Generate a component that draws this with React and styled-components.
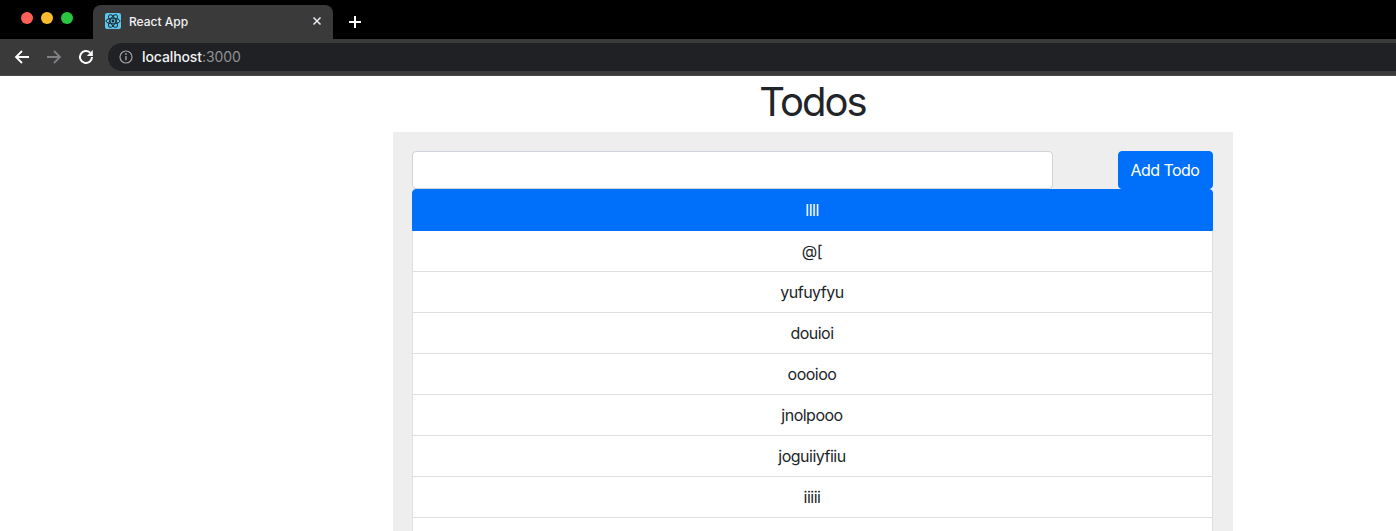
import React from "react";
import styled, { createGlobalStyle } from "styled-components";

const Global = createGlobalStyle`
  html, body { margin: 0; padding: 0; height: 531px; overflow: hidden; background: #fff; }
  body { font-family: Inter, "Liberation Sans", sans-serif; color: #212529; }
  * { box-sizing: border-box; }
`;
const Page = styled.div`height: 531px; overflow: hidden; display: flex; flex-direction: column;`;
const TabStrip = styled.div`height: 39px; flex: none; background: #000; display: flex; align-items: flex-end;`;
const Lights = styled.div`width: 93px; flex: none; height: 39px; display: flex; gap: 8px; padding: 12px 0 0 21px;`;
const Light = styled.span`width: 12px; height: 12px; border-radius: 50%; background: ${p => p.$c};`;
const Tab = styled.div`
  width: 240px; height: 34px; background: #3a3a3b; border-radius: 8px 8px 0 0;
  display: flex; align-items: center; padding: 0 11px 2px 12px; color: #f1f3f4; font-size: 12px; font-weight: 500;
`;
const Favicon = styled.svg`width: 16px; height: 16px; margin-right: 8px; flex: none;`;
const TabTitle = styled.span`flex: 1;`;
const IconSvg = styled.svg`flex: none; display: block;`;
const NewTab = styled.div`margin: 0 0 10px 15px; height: 14px;`;
const Toolbar = styled.div`
  height: 37px; flex: none; background: #3a3a3b; display: flex; align-items: center; padding: 0 0 1px 14px;
  border-bottom: 1px solid #4a4a4c;
`;
const NavButton = styled.div`width: 32px; flex: none; display: flex;`;
const Omnibox = styled.div`
  flex: 1; height: 28px; margin-left: -2px; background: #202124; border-radius: 14px 0 0 14px;
  display: flex; align-items: center; padding-left: 11px; font-size: 14px; font-weight: 500; color: #f1f3f4;
`;
const Host = styled.span`margin-left: 9px; letter-spacing: -0.1px;`;
const Port = styled.span`color: #8f9195; font-weight: 400;`;
const Main = styled.main`flex: 1; display: flex; flex-direction: column; align-items: center; padding-left: 229px; min-height: 0;`;
const Title = styled.h1`margin: 0; font-size: 40px; line-height: 48px; height: 56px; padding-top: 2px; font-weight: 400; letter-spacing: -2px; color: #212529;`;
const Panel = styled.section`width: 840px; flex: 1; background: #eee; padding: 19px 20px 19px 19px; min-height: 0; overflow: hidden;`;
const Form = styled.form`display: flex; justify-content: space-between; height: 38px;`;
const Input = styled.input`
  width: 641px; height: 38px; border: 1px solid #ced4da; border-radius: 4px; background: #fff; padding: 6px 12px;
`;
const Button = styled.button`
  width: 95px; height: 38px; border: 1px solid #0070fa; background: #0070fa; color: #fff; border-radius: 4px;
  font-family: inherit; font-size: 16px; letter-spacing: -0.55px; padding: 0;
`;
const List = styled.ul`list-style: none; margin: 0; padding: 0; display: flex; flex-direction: column;`;
const Item = styled.li`
  height: ${p => (p.$active ? 42 : 41)}px; flex: none; display: flex; align-items: center; justify-content: center;
  font-size: 16px; letter-spacing: -0.5px; background: ${p => (p.$active ? "#0070fa" : "#fff")}; color: ${p => (p.$active ? "#fff" : "#212529")};
  border: 1px solid ${p => (p.$active ? "#0070fa" : "#dfdfdf")};
  border-top-width: ${p => (p.$active ? 1 : 0)}px;
  border-radius: ${p => (p.$active ? "4px 4px 0 0" : "0")};
`;

const todos = ["@[", "yufuyfyu", "douioi", "oooioo", "jnolpooo", "joguiiyfiiu", "iiiii", ""];

export default function App() {
  return (
    <Page>
      <Global />
      <TabStrip>
        <Lights>
          <Light $c="#ff5f57" />
          <Light $c="#febc2e" />
          <Light $c="#28c840" />
        </Lights>
        <Tab>
          <Favicon viewBox="0 0 16 16">
            <rect width="16" height="16" rx="2" fill="#5cc8ee" />
            <g fill="none" stroke="#1c2c34" strokeWidth="1">
              <ellipse cx="8" cy="8" rx="7" ry="2.8" />
              <ellipse cx="8" cy="8" rx="7" ry="2.8" transform="rotate(60 8 8)" />
              <ellipse cx="8" cy="8" rx="7" ry="2.8" transform="rotate(120 8 8)" />
            </g>
            <circle cx="8" cy="8" r="1.4" fill="#1c2c34" />
          </Favicon>
          <TabTitle>React App</TabTitle>
          <IconSvg width="10" height="10" viewBox="0 0 10 10">
            <path d="M1.5 1.5l7 7M8.5 1.5l-7 7" stroke="#e8eaed" strokeWidth="1.5" />
          </IconSvg>
        </Tab>
        <NewTab>
          <IconSvg width="14" height="14" viewBox="0 0 14 14">
            <path d="M7 1v12M1 7h12" stroke="#fff" strokeWidth="2" />
          </IconSvg>
        </NewTab>
      </TabStrip>
      <Toolbar>
        <NavButton>
          <IconSvg width="16" height="16" viewBox="0 0 16 16">
            <path d="M15 8H2M8 2L2 8l6 6" fill="none" stroke="#fff" strokeWidth="1.8" />
          </IconSvg>
        </NavButton>
        <NavButton>
          <IconSvg width="16" height="16" viewBox="0 0 16 16">
            <path d="M1 8h13M8 2l6 6-6 6" fill="none" stroke="#7f8083" strokeWidth="1.8" />
          </IconSvg>
        </NavButton>
        <NavButton>
          <IconSvg width="16" height="16" viewBox="0 0 16 16">
            <path d="M14 8a6 6 0 1 1-1.8-4.3" fill="none" stroke="#fff" strokeWidth="2" />
            <path d="M14.8 1v6H8.8z" fill="#fff" />
          </IconSvg>
        </NavButton>
        <Omnibox>
          <IconSvg width="14" height="14" viewBox="0 0 14 14">
            <circle cx="7" cy="7" r="6" fill="none" stroke="#a0a2a6" strokeWidth="1.2" />
            <path d="M7 6v4.2" stroke="#a0a2a6" strokeWidth="1.4" />
            <circle cx="7" cy="4" r="0.9" fill="#a0a2a6" />
          </IconSvg>
          <Host>localhost<Port>:3000</Port></Host>
        </Omnibox>
      </Toolbar>
      <Main>
        <Title>Todos</Title>
        <Panel>
          <Form onSubmit={e => e.preventDefault()}>
            <Input />
            <Button>Add Todo</Button>
          </Form>
          <List>
            <Item $active>llll</Item>
            {todos.map((t, i) => <Item key={i}>{t}</Item>)}
          </List>
        </Panel>
      </Main>
    </Page>
  );
}
